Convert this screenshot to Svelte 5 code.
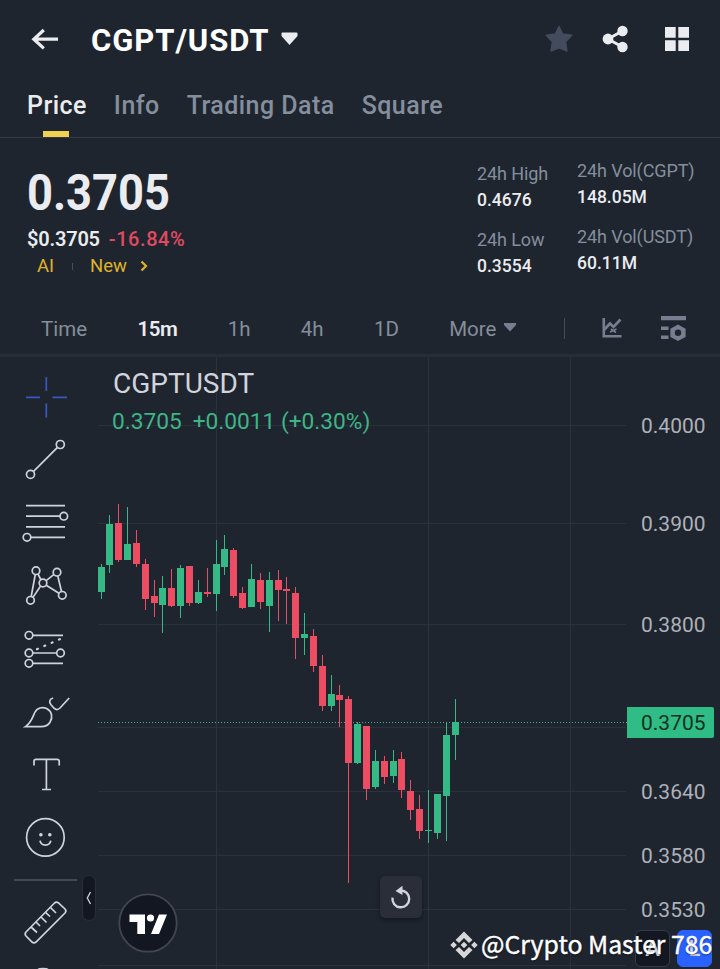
<script lang="ts">
	type Candle = [high: number, low: number, top: number, bottom: number, up: 0 | 1];

	const tabs = ['Price', 'Info', 'Trading Data', 'Square'];
	const intervals = ['Time', '15m', '1h', '4h', '1D'];
	let activeTab = $state('Price');
	let activeInterval = $state('15m');

	const stats = [
		[
			{ label: '24h High', value: '0.4676' },
			{ label: '24h Low', value: '0.3554' },
		],
		[
			{ label: '24h Vol(CGPT)', value: '148.05M' },
			{ label: '24h Vol(USDT)', value: '60.11M' },
		],
	];

	const priceTicks = [
		{ y: 425.5, label: '0.4000' },
		{ y: 523.5, label: '0.3900' },
		{ y: 624.5, label: '0.3800' },
		{ y: 727.5, label: '' },
		{ y: 791.5, label: '0.3640' },
		{ y: 855.5, label: '0.3580' },
		{ y: 909.5, label: '0.3530' },
		{ y: 965.5, label: '' },
	];
	const timeTicks = [216.5, 428.5, 570.5];

	const candles: Candle[] = [
		[564, 599, 567, 592, 1],
		[515, 573, 524, 565, 1],
		[504, 562, 523, 560, 0],
		[507, 560, 544, 560, 1],
		[530, 567, 543, 564, 0],
		[559, 610, 564, 599, 0],
		[580, 617, 596, 603, 0],
		[576, 633, 588, 605, 1],
		[569, 607, 588, 606, 0],
		[565, 618, 568, 606, 1],
		[566, 606, 566, 603, 0],
		[580, 604, 592, 603, 1],
		[568, 597, 592, 594, 0],
		[540, 611, 564, 594, 1],
		[535, 575, 549, 567, 1],
		[548, 598, 550, 596, 0],
		[587, 609, 593, 608, 0],
		[564, 607, 579, 607, 1],
		[573, 609, 580, 602, 0],
		[572, 632, 580, 606, 1],
		[570, 621, 580, 590, 0],
		[577, 624, 589, 591, 0],
		[587, 659, 593, 638, 0],
		[613, 655, 634, 638, 1],
		[629, 672, 636, 666, 0],
		[655, 711, 666, 706, 0],
		[675, 711, 694, 706, 1],
		[685, 727, 695, 700, 0],
		[696, 883, 699, 763, 0],
		[722, 764, 724, 763, 1],
		[726, 800, 726, 789, 0],
		[750, 789, 761, 787, 1],
		[756, 784, 761, 777, 0],
		[750, 783, 761, 776, 1],
		[752, 798, 759, 790, 0],
		[780, 820, 791, 810, 0],
		[795, 839, 809, 831, 0],
		[790, 843, 830, 831, 1],
		[794, 839, 794, 833, 1],
		[722, 841, 735, 796, 1],
		[699, 760, 722, 735, 1],
	];
	const candleX = (i: number) => 101 + Math.floor(i * 8.85);
</script>

<div class="app">
	<header class="topbar">
		<svg class="back" width="30" height="24" viewBox="0 0 30 24">
			<path d="M29 12.2H4.5M14.8 3L4.8 12.2L14.8 21.4" fill="none" stroke="#eaecef" stroke-width="3.2" />
		</svg>
		<h1>CGPT/USDT</h1>
		<svg class="caret" width="17" height="14" viewBox="0 0 17 14">
			<path d="M0.5 1.5Q0.5 .5 1.5 .5H15.5Q16.5 .5 16.5 1.5V4L8.5 13L.5 4Z" fill="#eaecef" />
		</svg>
		<div class="actions">
			<svg width="28" height="28" viewBox="0 0 28 28">
				<path d="M14 1.5L17.7 9L26.8 10.2L20.6 16.8L22 26L14 22.8L6 26L7.4 16.8L1.2 10.2L10.3 9Z" fill="#434c5c" stroke="#434c5c" stroke-width="1.4" stroke-linejoin="round" />
			</svg>
			<svg width="28" height="28" viewBox="0 0 28 28">
				<path d="M21.5 6L7 14L21.5 22" fill="none" stroke="#eaecef" stroke-width="3" />
				<g fill="#eaecef">
					<circle cx="21.5" cy="6" r="5.2" />
					<circle cx="7" cy="14" r="5.4" />
					<circle cx="21.5" cy="22" r="5.2" />
				</g>
			</svg>
			<svg width="24" height="24" viewBox="0 0 24 24">
				<path d="M0 0H10.7V10.7H0ZM13.3 0H24V10.7H13.3ZM0 13.3H10.7V24H0ZM13.3 13.3H24V24H13.3Z" fill="#eaecef" />
			</svg>
		</div>
	</header>

	<nav class="tabs">
		{#each tabs as tab}
			<button class:active={tab === activeTab} onclick={() => (activeTab = tab)}>{tab}</button>
		{/each}
	</nav>

	<section class="summary">
		<div class="quote">
			<div class="last">0.3705</div>
			<div class="fiat"><span>$0.3705</span><span class="down">-16.84%</span></div>
			<div class="tags">
				<span>AI</span>
				<i></i>
				<span>New</span>
				<svg width="8" height="12" viewBox="0 0 8 12"><path d="M1.5 1.5L6 6L1.5 10.5" fill="none" stroke="#dfb22c" stroke-width="2.2" /></svg>
			</div>
		</div>
		{#each stats as column, i}
			<dl class="stats" class:volume={i === 1}>
				{#each column as stat}
					<dt>{stat.label}</dt>
					<dd>{stat.value}</dd>
				{/each}
			</dl>
		{/each}
	</section>

	<div class="intervals">
		{#each intervals as interval}
			<button class:active={interval === activeInterval} onclick={() => (activeInterval = interval)}>{interval}</button>
		{/each}
		<button class="more">
			More
			<svg width="12" height="9" viewBox="0 0 12 9"><path d="M0 0H12V2L6 8.5L0 2Z" fill="#777e90" /></svg>
		</button>
		<i class="separator"></i>
		<svg class="indicator" width="20" height="20" viewBox="0 0 20 20">
			<path d="M1.8 0V18.2H19.5M2 12L8 5.5L11.5 9L18.5 1.5" fill="none" stroke="#777e90" stroke-width="2.6" />
			<path d="M8 14L14.5 11M9 11L14 14.5" stroke="#777e90" stroke-width="1.6" />
		</svg>
		<svg class="settings" width="25" height="25" viewBox="0 0 25 25">
			<path d="M0 0H25V4.2H0ZM0 10.5H7.5V14H0ZM0 19.5H7.5V23H0Z" fill="#777e90" />
			<path d="M17 8.5L24.6 12.7V21L17 25L9.4 21V12.7ZM17 13.6A3.2 3.2 0 1 0 17 20A3.2 3.2 0 1 0 17 13.6Z" fill="#777e90" fill-rule="evenodd" />
		</svg>
	</div>

	<main class="chart">
		<aside class="tools">
			<svg viewBox="0 0 90 63" class="selected">
				<path d="M46.3 11V25M46.3 37.5V51.5M26 31.3H40M52.5 31.3H67" />
			</svg>
			<svg viewBox="0 0 90 63">
				<circle cx="60.3" cy="15.5" r="4" /><circle cx="30.5" cy="45.4" r="4" />
				<path d="M33.3 42.6L57.5 18.3" />
			</svg>
			<svg viewBox="0 0 90 63">
				<path d="M26 13.7H65M26 24.2H60M26 34.8H65M31 45.3H65" />
				<circle cx="63.8" cy="24.2" r="3.8" /><circle cx="27" cy="45.3" r="3.8" />
			</svg>
			<svg viewBox="0 0 90 63">
				<circle cx="36" cy="15.7" r="3.8" /><circle cx="57" cy="17.2" r="3.8" /><circle cx="43" cy="28" r="3.8" />
				<circle cx="30.5" cy="45.3" r="3.8" /><circle cx="62.3" cy="40.3" r="3.8" />
				<path d="M35.3 19.5L31.2 41.5M38 19L41 25M46.2 25.6L53.7 19.7M57.8 21L61.5 36.5M46.2 30.2L59 38.3M40.6 31L33 42.4" />
			</svg>
			<svg viewBox="0 0 90 63">
				<circle cx="29" cy="17.3" r="3.8" /><circle cx="29" cy="35" r="3.8" /><circle cx="60.5" cy="35" r="3.8" /><circle cx="29" cy="45.3" r="3.8" />
				<path d="M33 17.3H63M33 35H56.5M33 45.3H63" />
				<path d="M37 31.2L61 20.7" stroke-dasharray="1 7" stroke-width="2.2" stroke-linecap="round" />
			</svg>
			<svg viewBox="0 0 90 63">
				<path d="M25.5 45.6C31 42 32.5 36.5 34.8 31.5C37 26.8 42.5 25.3 47 27.8C52 30.5 53 36.5 50 41.2C48 44.5 45 45.7 41 45.7Z" />
				<path d="M53.2 17C49.3 18 48.8 21 51 23.7L54 27.2C56 29 58.4 28.6 60 27L69.2 17" />
			</svg>
			<svg viewBox="0 0 90 63">
				<path d="M34 21.5V17Q34 15.3 36 15.3H57Q59.2 15.3 59.2 17V21.5M46.4 15.3V45.5M42 45.5H51" />
			</svg>
			<svg viewBox="0 0 90 63">
				<circle cx="45.4" cy="30.4" r="18.8" />
				<circle cx="40.9" cy="27.7" r="1.8" class="dot" /><circle cx="49.8" cy="27.7" r="1.8" class="dot" />
				<path d="M40 33.7C41 39.5 49.8 39.5 50.8 33.7" />
			</svg>
			<hr />
			<svg viewBox="0 0 90 63">
				<path d="M54.5 13Q56.5 11.3 58.5 13L65 19Q66.8 21 65 23L36 52Q34 53.7 32 52L26 46Q24.3 44 26 42Z" />
				<path d="M31 37L37 42.5M36 32L40 36M41 27L46.5 32.5M45.5 22.3L50 26.5M50.5 17.5L56 23" />
			</svg>
			<svg viewBox="0 0 90 63">
				<path d="M38 18V17C38 15 48 15 48 17V18" />
			</svg>
		</aside>

		<svg class="plot" width="623" height="612" viewBox="97 357 623 612">
			<g class="grid">
				{#each timeTicks as x}
					<line x1={x} x2={x} y1="357" y2="969" />
				{/each}
				{#each priceTicks as tick}
					<line x1="98" x2="626" y1={tick.y} y2={tick.y} />
				{/each}
			</g>
			<line class="last-line" x1="98" x2="627" y1="722.5" y2="722.5" />
			{#each candles as [high, low, top, bottom, up], i}
				<g class={up ? 'up' : 'fall'}>
					<rect x={candleX(i)} y={high} width="1" height={low - high} />
					<rect x={candleX(i) - 3} y={top} width="7" height={bottom - top} />
				</g>
			{/each}
			{#each priceTicks as tick}
				<text x="641" y={tick.y + 7.5}>{tick.label}</text>
			{/each}
			<path class="tag" d="M627 707H712Q714 707 714 709V736Q714 738 712 738H627Z" />
			<text class="tag-text" x="641" y="730">0.3705</text>
		</svg>

		<div class="legend">
			<div class="symbol">CGPTUSDT</div>
			<div class="change"><span>0.3705</span><span>+0.0011 (+0.30%)</span></div>
		</div>

		<button class="collapse" aria-label="Collapse toolbar">
			<svg width="6" height="14" viewBox="0 0 6 14"><path d="M4.5 1L1.3 7L4.5 13" fill="none" stroke="#c5cad6" stroke-width="1.4" /></svg>
		</button>
		<svg class="tv" width="60" height="60" viewBox="0 0 60 60">
			<circle cx="30" cy="30" r="28.7" fill="#131722" stroke="#434651" stroke-width="1.8" />
			<path d="M11.5 21.5H27V41H19.3V29H11.5ZM41 21.5H49L41 41H33Z" fill="#fff" />
			<circle cx="32.5" cy="25" r="3.6" fill="#fff" />
		</svg>
		<button class="reset" aria-label="Reset chart">
			<svg width="22" height="24" viewBox="0 0 22 24">
				<path d="M2.5 12.7A8.4 8.4 0 1 0 10.5 5.5" fill="none" stroke="#d1d4dc" stroke-width="2.4" />
				<path d="M5.5 6L12.5 .8V10Z" fill="#d1d4dc" />
			</svg>
		</button>
		<div class="scales">
			<button>A</button>
			<button class="log">L</button>
		</div>
		<div class="watermark">
			<svg width="28" height="28" viewBox="0 0 28 28" fill="#d7d7d7">
				<path d="M14 .5L22.5 9L19 12L14 7L9 12L5.5 9ZM14 27.5L22.5 19L19 16L14 21L9 16L5.5 19ZM3.6 10.7L6.9 14L3.6 17.3L.3 14ZM24.4 10.7L27.7 14L24.4 17.3L21.1 14ZM14 10.7L17.3 14L14 17.3L10.7 14Z" />
			</svg>
			<span>@Crypto Master 786</span>
		</div>
	</main>
</div>

<style>
	:global(body) {
		background: #1f252f;
		overflow: hidden;
	}

	.app {
		width: 720px;
		height: 969px;
		overflow: hidden;
		background: #1f252f;
		color: #eaecef;
		font-family: Roboto, 'Liberation Sans', sans-serif;
	}

	button {
		padding: 0;
		border: 0;
		background: none;
		color: inherit;
		font: inherit;
	}

	svg {
		flex: none;
	}

	.topbar {
		display: flex;
		align-items: center;
		height: 77px;
		padding: 0 31px 0 29px;
		box-sizing: border-box;
	}

	.topbar h1 {
		margin: 4px 0 0 32px;
		width: 177px;
		color: #fff;
		font-size: 31px;
		font-weight: 700;
		letter-spacing: 0.95px;
		line-height: 40px;
		white-space: nowrap;
	}

	.caret {
		margin: 1px 0 0 13px;
	}

	.actions {
		display: flex;
		align-items: center;
		margin-left: auto;
	}

	.actions svg:nth-child(2) {
		margin: 0 36px 0 28px;
	}

	.tabs {
		display: flex;
		gap: 27px;
		height: 60px;
		padding-left: 27px;
		border-bottom: 1px solid #323842;
	}

	.tabs button {
		position: relative;
		height: 60px;
		padding-bottom: 3px;
		color: #848e9c;
		font-size: 25px;
		font-weight: 500;
		letter-spacing: 0.45px;
	}

	.tabs button.active {
		color: #eaecef;
	}

	.tabs button.active::after {
		content: '';
		position: absolute;
		left: 16px;
		bottom: 0;
		width: 26px;
		height: 6px;
		background: #f0d050;
	}

	.summary {
		display: flex;
		height: 164px;
	}

	.quote {
		width: 450px;
		padding: 24px 0 0 27px;
	}

	.last {
		height: 62px;
		font-size: 50px;
		font-weight: 700;
		line-height: 62px;
		transform: scaleX(0.905);
		transform-origin: left;
	}

	.fiat {
		display: flex;
		gap: 9px;
		margin-top: 3px;
		font-size: 20px;
		font-weight: 600;
		letter-spacing: -0.2px;
		line-height: 24px;
	}

	.down {
		color: #e04a60;
		font-weight: 500;
		letter-spacing: 0.55px;
	}

	.tags {
		display: flex;
		align-items: center;
		padding: 2px 0 0 10px;
		color: #dfb22c;
		font-size: 18.5px;
		line-height: 26px;
	}

	.tags i {
		width: 1px;
		height: 7px;
		margin: 0 17px 0 18px;
		background: #474d57;
	}

	.tags svg {
		margin-left: 13px;
	}

	.stats {
		width: 100px;
		margin: 24px 0 0;
		white-space: nowrap;
	}

	.stats.volume {
		margin-top: 21px;
	}

	.stats dt {
		color: #848e9c;
		font-size: 18px;
		letter-spacing: -0.1px;
		line-height: 24px;
	}

	.stats dd {
		margin: 1px 0 14px;
		font-size: 17.5px;
		font-weight: 500;
		line-height: 27px;
	}

	.intervals {
		display: flex;
		align-items: center;
		height: 52px;
		padding-left: 41px;
		border-bottom: 3px solid #272d38;
		color: #848e9c;
		font-size: 20.5px;
	}

	.intervals button {
		margin: 2px 50.3px 0 0;
	}

	.intervals button.active {
		color: #eaecef;
		font-weight: 600;
		letter-spacing: -0.4px;
	}

	.intervals .more {
		display: flex;
		align-items: center;
		gap: 8px;
		margin: 2px 48px 0 0;
	}

	.more svg {
		margin-top: -3px;
	}

	.separator {
		width: 1px;
		height: 21px;
		background: #474d57;
	}

	.indicator {
		margin-left: 37px;
	}

	.settings {
		margin-left: 39px;
	}

	.chart {
		position: relative;
		display: flex;
		height: 612px;
	}

	.tools {
		display: flex;
		flex: none;
		flex-direction: column;
		width: 97px;
		padding-top: 9px;
		box-sizing: border-box;
	}

	.tools svg {
		width: 90px;
		height: 63px;
		fill: none;
		stroke: #d0d3db;
		stroke-width: 1.7;
	}

	.tools .selected {
		stroke: #3558c4;
	}

	.tools .dot {
		fill: #d0d3db;
		stroke: none;
	}

	.tools hr {
		flex: none;
		width: 63px;
		height: 2px;
		margin: 9px 0 9px 14px;
		border: 0;
		background: #434853;
	}

	.grid {
		stroke: #2b323c;
	}

	.last-line {
		stroke: #46a985;
		stroke-dasharray: 1 2;
	}

	.up {
		fill: #35b985;
	}

	.fall {
		fill: #ec4d62;
	}

	.plot text {
		fill: #adb1b9;
		font-size: 21px;
	}

	.plot .tag {
		fill: #2fbd85;
	}

	.plot .tag-text {
		fill: #12301f;
	}

	.legend {
		position: absolute;
		top: 10px;
		left: 112px;
	}

	.symbol {
		padding-left: 1px;
		color: #d1d4dc;
		font-size: 28px;
		line-height: 34px;
	}

	.change {
		display: flex;
		gap: 11px;
		margin-top: 7px;
		color: #3db587;
		font-size: 22.7px;
		line-height: 28px;
	}

	.collapse {
		position: absolute;
		top: 518px;
		left: 82px;
		display: flex;
		align-items: center;
		justify-content: center;
		width: 14px;
		height: 46px;
		border: 1px solid #2a2e39;
		border-radius: 7px;
		background: #131722;
	}

	.tv {
		position: absolute;
		top: 536px;
		left: 118px;
	}

	.reset {
		position: absolute;
		top: 519px;
		left: 380px;
		display: flex;
		align-items: center;
		justify-content: center;
		width: 42px;
		height: 42px;
		border-radius: 5px;
		background: #2a2e39;
		box-shadow: 0 2px 4px rgba(0, 0, 0, 0.4);
	}

	.scales {
		position: absolute;
		top: 573px;
		left: 635px;
		display: flex;
		gap: 7px;
	}

	.scales button {
		width: 35px;
		height: 37px;
		border: 1px solid #363a45;
		border-radius: 6px;
		background: #131722;
		color: #d1d4dc;
		font-size: 22px;
		font-weight: 500;
	}

	.scales .log {
		border-color: #2962ff;
		background: #2962ff;
	}

	.watermark {
		position: absolute;
		top: 570px;
		left: 450px;
		display: flex;
		align-items: center;
		gap: 4px;
		height: 36px;
		color: #fff;
		font-family: 'Noto Sans CJK SC', 'Noto Sans', sans-serif;
		font-size: 24.8px;
		-webkit-text-stroke: 0.4px #fff;
		white-space: nowrap;
		text-shadow: 0 1px 2px rgba(0, 0, 0, 0.5);
	}

	.watermark span {
		margin: -4px 0 0 -1px;
	}
</style>
